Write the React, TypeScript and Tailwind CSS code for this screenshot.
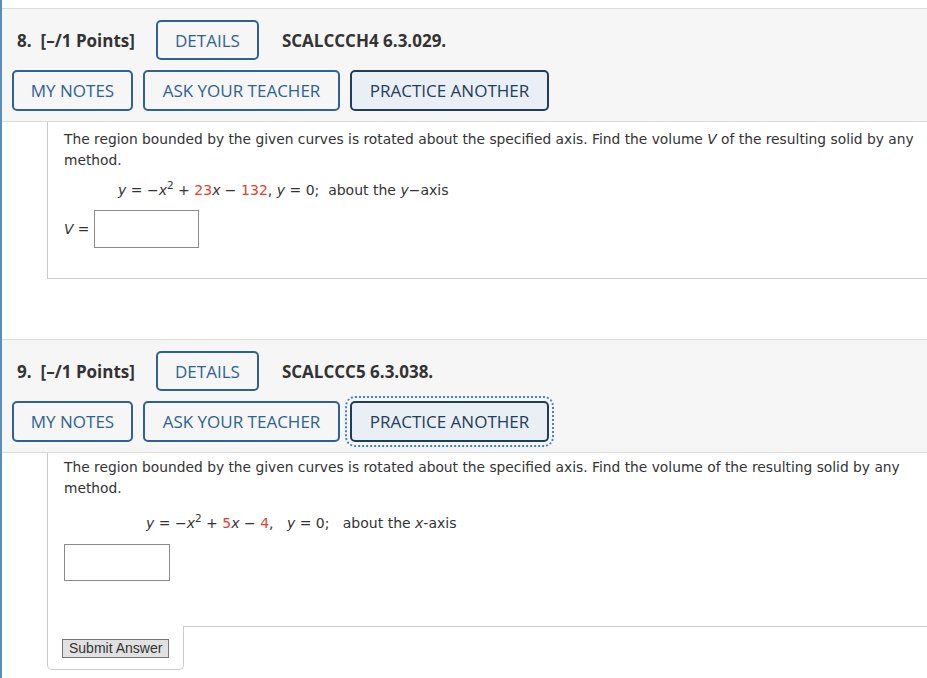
const RED = "text-[#e5412d]";

function Btn({
  children,
  w,
  active = false,
  focus = false,
}: {
  children: React.ReactNode;
  w: string;
  active?: boolean;
  focus?: boolean;
}) {
  const tone = active
    ? "bg-[#e9eff4] border-[#1f3d5c] text-[#1f3d5c]"
    : "bg-transparent border-[#2e6294] text-[#2e6294]";
  const ring = focus ? "outline-2 outline-dotted outline-offset-[3px] outline-[#3f7fe0]" : "";
  return (
    <button
      className={`${w} ${tone} ${ring} h-[41px] rounded-[5px] border-2 text-[17px] font-medium uppercase font-['Open_Sans',sans-serif] flex items-center justify-center`}
    >
      {children}
    </button>
  );
}

function Header({ num, code, focus = false }: { num: string; code: string; focus?: boolean }) {
  return (
    <div className="border-t border-b border-[#dddddd] bg-[#f6f6f6] pl-[10px] pt-[11px] pb-[10px] font-['Open_Sans',sans-serif] text-[#333]">
      <div className="flex items-center h-[40px] text-[17px] font-bold">
        <span className="ml-[5px]">{num}.</span>
        <span className="ml-[9px]">[–/1 Points]</span>
        <button className="ml-[21px] w-[103px] h-[40px] rounded-[5px] border-2 border-[#2e6294] text-[#2e6294] text-[17px] font-medium">
          DETAILS
        </button>
        <span className="ml-[23px]">{code}</span>
      </div>
      <div className="mt-[10px] flex gap-[10px]">
        <Btn w="w-[121px]">My Notes</Btn>
        <Btn w="w-[197px]">Ask Your Teacher</Btn>
        <Btn w="w-[199px]" active focus={focus}>
          Practice Another
        </Btn>
      </div>
    </div>
  );
}

export default function App() {
  return (
    <div className="min-h-screen bg-white border-l-2 border-[#5b8db8] pt-[8px] text-[#333] font-['DejaVu_Sans','Verdana',sans-serif] text-[13.8px] leading-[21px]">
      <Header num="8" code="SCALCCCH4 6.3.029." />
      <div className="ml-[45px] border-l border-b border-[#cccccc] pl-[16px] pt-[7px] pb-[30px]">
        <p>
          The region bounded by the given curves is rotated about the specified axis. Find the volume <i>V</i> of the
          resulting solid by any method.
        </p>
        <div className="mt-[9px] ml-[54px] whitespace-pre text-[14px]">
          <i>y</i> = −<i>x</i>
          <sup className="top-[-0.6em]">2</sup> + <span className={RED}>23</span>
          <i>x</i> − <span className={RED}>132</span>, <i>y</i> = 0;  about the <i>y</i>−axis
        </div>
        <div className="mt-[9px] flex items-center gap-[5px]">
          <span>
            <i>V</i> =
          </span>
          <div className="w-[105px] h-[38px] border border-[#8a8a8a] bg-white" />
        </div>
      </div>

      <div className="mt-[60px]">
        <Header num="9" code="SCALCCC5 6.3.038." focus />
      </div>
      <div className="ml-[45px] border-l border-[#cccccc] pl-[16px] pt-[4px] pb-[45px]">
        <p className="pr-[18px]">
          The region bounded by the given curves is rotated about the specified axis. Find the volume of the resulting
          solid by any method.
        </p>
        <div className="mt-[14px] ml-[82px] whitespace-pre text-[14px]">
          <i>y</i> = −<i>x</i>
          <sup className="top-[-0.6em]">2</sup> + <span className={RED}>5</span>
          <i>x</i> − <span className={RED}>4</span>,   <i>y</i> = 0;   about the <i>x</i>-axis
        </div>
        <div className="mt-[10px] w-[106px] h-[37px] border border-[#8a8a8a] bg-white" />
      </div>
      <div className="ml-[45px] flex">
        <div className="w-[137px] border-l border-r border-b border-[#cccccc] rounded-b-[5px] pl-[14px] pt-[12px] pb-[10px]">
          <button className="h-[19px] px-[6px] border border-[#767676] bg-[#e1e1e1] text-[#333] text-[14px] leading-none font-['Liberation_Sans',Arial,sans-serif]">
            Submit Answer
          </button>
        </div>
        <div className="flex-1 border-t border-[#cccccc]" />
      </div>
    </div>
  );
}
